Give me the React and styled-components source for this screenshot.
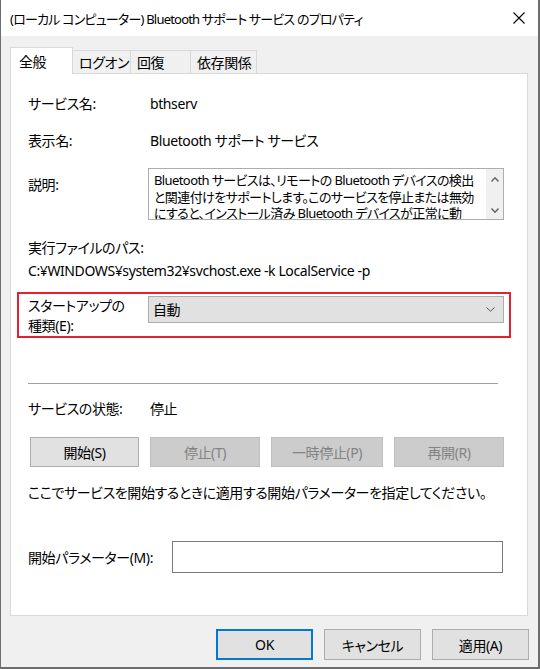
import React from "react";
import styled, { createGlobalStyle } from "styled-components";

const GlobalStyle = createGlobalStyle`
  html, body {
    margin: 0;
    padding: 0;
    background: #ffffff;
  }
  * {
    box-sizing: border-box;
  }
`;

const Window = styled.div`
  width: 540px;
  height: 669px;
  display: flex;
  flex-direction: column;
  background: #f0f0f0;
  border-left: 1px solid #6d6d6d;
  border-right: 2px solid #6d6d6d;
  border-bottom: 2px solid #6d6d6d;
  font-family: "Noto Sans", "Noto Sans CJK JP", sans-serif;
  font-size: 14px;
  letter-spacing: -0.4px;
  font-feature-settings: "palt";
  color: #000000;
`;

const TitleBar = styled.div`
  height: 36px;
  flex: none;
  display: flex;
  align-items: center;
  justify-content: space-between;
  padding: 0 13px 0 9px;
  background: #ffffff;
  font-size: 13px;
  letter-spacing: -0.8px;
  white-space: nowrap;
`;

const Body = styled.div`
  flex: 1;
  display: flex;
  flex-direction: column;
  padding: 11px 0 0 9px;
`;

const TabRow = styled.div`
  display: flex;
  align-items: flex-end;
  height: 27px;
  margin-bottom: -1px;
  position: relative;
  z-index: 1;
`;

const Tab = styled.div`
  width: ${(p) => p.$w}px;
  height: ${(p) => (p.$active ? 27 : 24)}px;
  display: flex;
  align-items: center;
  padding-left: ${(p) => (p.$active ? 8 : 6)}px;
  white-space: nowrap;
  background: ${(p) => (p.$active ? "#ffffff" : "#f0f0f0")};
  border: 1px solid #d9d9d9;
  border-bottom: ${(p) => (p.$active ? "none" : "1px solid #d9d9d9")};
  & + & {
    margin-left: -1px;
  }
`;

const Panel = styled.div`
  width: 518px;
  height: 543px;
  display: flex;
  flex-direction: column;
  background: #ffffff;
  border: 1px solid #d9d9d9;
  padding: 20px 23px 0 17px;
`;

const InfoRow = styled.div`
  display: grid;
  grid-template-columns: 122px 1fr;
  line-height: 20px;
  margin-top: ${(p) => p.$mt || 0}px;
  white-space: nowrap;
`;

const Label = styled.div`
  padding-top: ${(p) => p.$pt || 0}px;
`;

const DescBox = styled.div`
  margin-left: -2px;
  height: 52px;
  display: flex;
  border: 1px solid #abadb3;
  overflow: hidden;
`;

const DescText = styled.div`
  flex: 1;
  min-width: 0;
  padding: 3px 0 0 5px;
  font-size: 13px;
  letter-spacing: -0.6px;
  line-height: 16.5px;
  overflow: hidden;
  white-space: nowrap;
`;

const ScrollBar = styled.div`
  width: 17px;
  flex: none;
  display: flex;
  flex-direction: column;
  justify-content: space-between;
  align-items: center;
  padding: 8px 0 6px;
  background: #f0f0f0;
`;

const PlainLine = styled.div`
  line-height: 20px;
  margin-top: ${(p) => p.$mt || 0}px;
  white-space: nowrap;
`;

const Highlight = styled.div`
  margin: 11px -7px 0 -11px;
  height: 46px;
  display: grid;
  grid-template-columns: 120px 1fr;
  align-items: start;
  padding: 2px 5px 0 9px;
  border: 2px solid #e6212f;
  line-height: 20px;
`;

const Select = styled.div`
  height: 27px;
  display: flex;
  align-items: center;
  justify-content: space-between;
  padding: 0 8px 0 4px;
  background: #e1e1e1;
  border: 1px solid #adadad;
`;

const Separator = styled.div`
  margin-top: 45px;
  width: 470px;
  height: 1px;
  background: #a0a0a0;
`;

const ButtonRow = styled.div`
  display: flex;
  justify-content: space-between;
  margin-top: 18px;
  padding-left: 2px;
`;

const Button = styled.div`
  width: ${(p) => p.$w}px;
  height: ${(p) => p.$h || 30}px;
  display: flex;
  align-items: center;
  justify-content: center;
  white-space: nowrap;
  background: ${(p) => (p.$disabled ? "#cccccc" : "#e1e1e1")};
  border: ${(p) =>
    p.$default ? "2px solid #0078d7" : p.$disabled ? "1px solid #bfbfbf" : "1px solid #adadad"};
  color: ${(p) => (p.$disabled ? "#838383" : "#000000")};
`;

const ParamRow = styled.div`
  display: flex;
  align-items: center;
  margin-top: 38px;
`;

const ParamLabel = styled.div`
  width: 144px;
  white-space: nowrap;
`;

const TextInput = styled.div`
  width: 331px;
  height: 32px;
  background: #ffffff;
  border: 1px solid #7a7a7a;
`;

const Footer = styled.div`
  display: flex;
  justify-content: flex-end;
  gap: 11px;
  margin-top: 13px;
  width: 519px;
`;

const Chevron = ({ up, w = 8, h = 5, color = "#606060", sw = 1.4 }) => (
  <svg width={w} height={h} viewBox={`0 0 ${w} ${h}`}>
    <polyline
      points={up ? `0.5,${h - 0.5} ${w / 2},0.8 ${w - 0.5},${h - 0.5}` : `0.5,0.5 ${w / 2},${h - 0.8} ${w - 0.5},0.5`}
      fill="none"
      stroke={color}
      strokeWidth={sw}
    />
  </svg>
);

const CloseIcon = () => (
  <svg width="12" height="12" viewBox="0 0 12 12">
    <path d="M0.5 0.5 L11.5 11.5 M11.5 0.5 L0.5 11.5" stroke="#000" strokeWidth="1.1" />
  </svg>
);

export default function App() {
  return (
    <>
      <GlobalStyle />
      <Window>
        <TitleBar>
          <span>(ローカル コンピューター) Bluetooth サポート サービス のプロパティ</span>
          <CloseIcon />
        </TitleBar>
        <Body>
          <TabRow>
            <Tab $w={63} $active>全般</Tab>
            <Tab $w={59}>ログオン</Tab>
            <Tab $w={61}>回復</Tab>
            <Tab $w={67}>依存関係</Tab>
          </TabRow>
          <Panel>
            <InfoRow>
              <Label>サービス名:</Label>
              <div>bthserv</div>
            </InfoRow>
            <InfoRow $mt={17}>
              <Label>表示名:</Label>
              <div>Bluetooth サポート サービス</div>
            </InfoRow>
            <InfoRow $mt={17}>
              <Label $pt={7}>説明:</Label>
              <DescBox>
                <DescText>
                  <div>Bluetooth サービスは、リモートの Bluetooth デバイスの検出</div>
                  <div>と関連付けをサポートします。このサービスを停止または無効</div>
                  <div>にすると、インストール済み Bluetooth デバイスが正常に動</div>
                </DescText>
                <ScrollBar>
                  <Chevron up />
                  <Chevron />
                </ScrollBar>
              </DescBox>
            </InfoRow>
            <PlainLine $mt={18}>実行ファイルのパス:</PlainLine>
            <PlainLine $mt={3}>C:¥WINDOWS¥system32¥svchost.exe -k LocalService -p</PlainLine>
            <Highlight>
              <div>
                スタートアップの
                <br />
                種類(E):
              </div>
              <Select>
                <span>自動</span>
                <Chevron w={9} h={5} color="#555" sw={1} />
              </Select>
            </Highlight>
            <Separator />
            <InfoRow $mt={15}>
              <Label>サービスの状態:</Label>
              <div>停止</div>
            </InfoRow>
            <ButtonRow>
              <Button $w={109}>開始(S)</Button>
              <Button $w={110} $disabled>停止(T)</Button>
              <Button $w={112} $disabled>一時停止(P)</Button>
              <Button $w={110} $disabled>再開(R)</Button>
            </ButtonRow>
            <PlainLine $mt={16}>ここでサービスを開始するときに適用する開始パラメーターを指定してください。</PlainLine>
            <ParamRow>
              <ParamLabel>開始パラメーター(M):</ParamLabel>
              <TextInput />
            </ParamRow>
          </Panel>
          <Footer>
            <Button $w={97} $h={31} $default>OK</Button>
            <Button $w={97} $h={31}>キャンセル</Button>
            <Button $w={97} $h={31}>適用(A)</Button>
          </Footer>
        </Body>
      </Window>
    </>
  );
}
